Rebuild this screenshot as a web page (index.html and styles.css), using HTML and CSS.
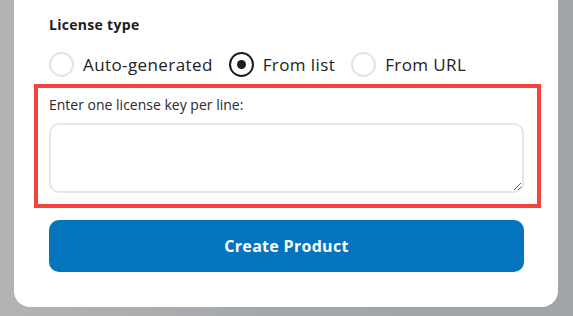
FILE: index.html
```html
<!DOCTYPE html>
<html>
<head>
<meta charset="utf-8">
<link rel="stylesheet" href="styles.css">
</head>
<body>
<div class="card">
  <h3 class="heading">License type</h3>
  <div class="radios">
    <label class="radio"><span class="dot"></span><span class="rlabel">Auto-generated</span></label>
    <label class="radio checked"><span class="dot"></span><span class="rlabel">From list</span></label>
    <label class="radio"><span class="dot"></span><span class="rlabel">From URL</span></label>
  </div>
  <div class="field">
    <div class="flabel">Enter one license key per line:</div>
    <textarea class="keys"></textarea>
  </div>
  <button class="submit">Create Product</button>
</div>
</body>
</html>
```
FILE: styles.css
```css
html, body { margin: 0; padding: 0; }
body {
  width: 573px;
  height: 316px;
  overflow: hidden;
  background: linear-gradient(90deg, #b2b3b4 0%, #a4a7aa 50%, #9fa5a9 100%);
  font-family: "Open Sans", "Liberation Sans", sans-serif;
  color: #222;
}
.card {
  margin: -18px 0 0 14px;
  width: 544px;
  box-sizing: border-box;
  padding: 34px 34px 35px 35px;
  background: #fff;
  border-radius: 16px;
}
.heading {
  margin: 0;
  font-size: 14px;
  line-height: 18px;
  font-weight: 700;
  letter-spacing: 0.3px;
  color: #1c1c1c;
}
.radios {
  display: flex;
  align-items: center;
  gap: 16px;
  margin-top: 17px;
  height: 26px;
}
.radio {
  display: flex;
  align-items: center;
  gap: 9px;
  font-size: 17px;
  letter-spacing: 0.4px;
  color: #222;
}
.dot {
  width: 25px;
  height: 25px;
  box-sizing: border-box;
  border: 2px solid #e4e4e4;
  border-radius: 50%;
  display: flex;
  align-items: center;
  justify-content: center;
}
.checked .dot { border-color: #1e1e1e; }
.checked .dot::after {
  content: "";
  width: 9px;
  height: 9px;
  border-radius: 50%;
  background: #1e1e1e;
}
.field {
  margin: 7px -17px 0 -15px;
  border: 4px solid #f4433d;
  padding: 8px 13px 11px 11px;
}
.flabel {
  font-size: 14px;
  line-height: 18px;
  color: #2a2a2a;
}
.keys {
  display: block;
  margin-top: 9px;
  width: 100%;
  height: 70px;
  box-sizing: border-box;
  border: 2px solid #e6e6e6;
  border-radius: 10px;
  resize: vertical;
  outline: none;
}
.submit {
  display: block;
  margin-top: 12px;
  width: 100%;
  height: 52px;
  border: 0;
  border-radius: 10px;
  background: #0474bf;
  color: #fff;
  font-family: inherit;
  font-size: 16px;
  font-weight: 700;
  letter-spacing: 0.3px;
}
```
